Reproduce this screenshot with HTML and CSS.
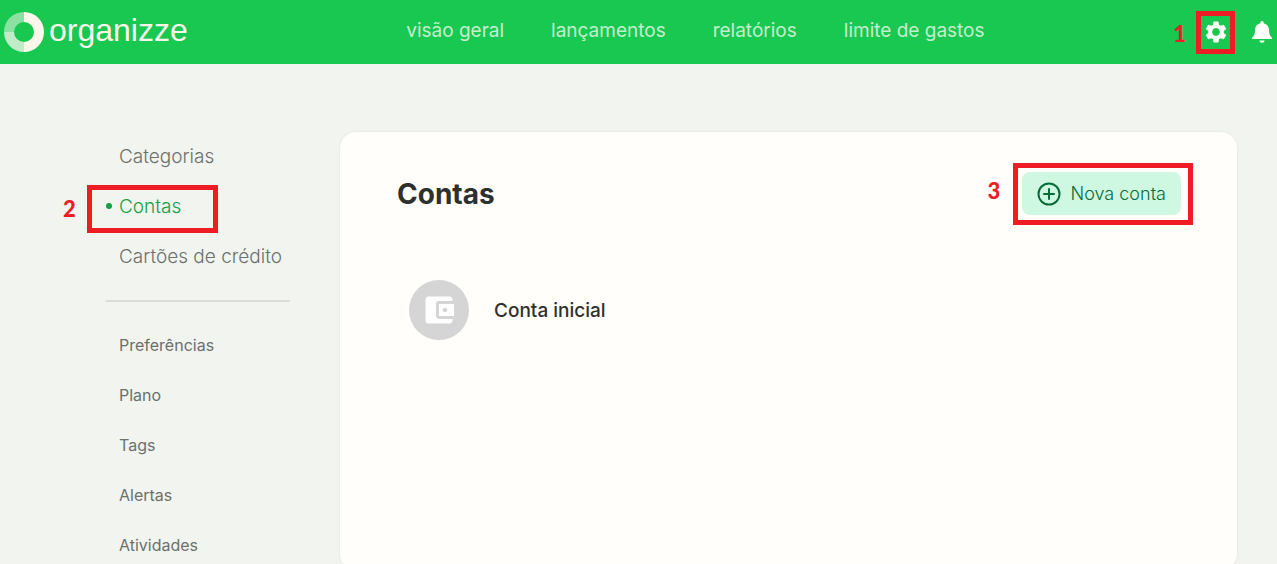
FILE: index.html
```html
<!DOCTYPE html>
<html lang="pt-BR">

<head>
    <meta charset="UTF-8">
    <meta name="viewport" content="width=device-width, initial-scale=1.0">
    <title>Organizze - Contas</title>
    <link rel="stylesheet" href="styles.css">
</head>

<body>
    <header class="topbar">
        <a class="logo" href="#">
            <svg width="40" height="40" viewBox="0 0 40 40" aria-hidden="true">
                <path fill="#fcf7ea" d="M20 0a20 20 0 0 1 0 40V30a10 10 0 0 0 0-20z" />
                <path fill="#c1ecc5" d="M20 40A20 20 0 0 1 0 20h10a10 10 0 0 0 10 10z" />
                <path fill="#8be19f" d="M0 20A20 20 0 0 1 20 0v10a10 10 0 0 0-10 10z" />
            </svg>
            <span>organizze</span>
        </a>

        <nav class="main-nav">
            <a href="#">visão geral</a>
            <a href="#">lançamentos</a>
            <a href="#">relatórios</a>
            <a href="#">limite de gastos</a>
        </nav>

        <div class="actions">
            <div class="step step-settings">
                <span class="step-number">1</span>
                <button class="icon-button" type="button" aria-label="Configurações">
                    <svg width="26" height="26" viewBox="0 0 24 24" aria-hidden="true">
                        <path fill="#fffef9" d="M19.14 12.94c.04-.3.06-.61.06-.94 0-.32-.02-.64-.07-.94l2.03-1.58a.49.49 0 0 0 .12-.61l-1.92-3.32a.488.488 0 0 0-.59-.22l-2.39.96c-.5-.38-1.03-.7-1.62-.94l-.36-2.54a.484.484 0 0 0-.48-.41h-3.84c-.24 0-.43.17-.47.41l-.36 2.54c-.59.24-1.13.57-1.62.94l-2.39-.96c-.22-.08-.47 0-.59.22L2.74 8.87c-.12.21-.08.47.12.61l2.03 1.58c-.05.3-.09.63-.09.94s.02.64.07.94l-2.03 1.58a.49.49 0 0 0-.12.61l1.92 3.32c.12.22.37.29.59.22l2.39-.96c.5.38 1.03.7 1.62.94l.36 2.54c.05.24.24.41.48.41h3.84c.24 0 .44-.17.47-.41l.36-2.54c.59-.24 1.13-.56 1.62-.94l2.39.96c.22.08.47 0 .59-.22l1.92-3.32c.12-.22.07-.47-.12-.61l-2.01-1.58zM12 15.6c-1.98 0-3.6-1.62-3.6-3.6s1.62-3.6 3.6-3.6 3.6 1.62 3.6 3.6-1.62 3.6-3.6 3.6z" />
                    </svg>
                </button>
            </div>
            <button class="icon-button" type="button" aria-label="Notificações">
                <svg width="22" height="24" viewBox="0 0 22 24" aria-hidden="true">
                    <path fill="#fffef9" d="M11 1c1 0 1.600.7 1.600 1.700v.5C16 4 18 6.500 18 9.500c0 4.500 1 6.500 2.800 8 .6.500.5 1.500-.5 1.500H1.700c-1 0-1.100-1-.5-1.500C3 16 4 14 4 9.500c0-3 2-5.500 5.400-6.300v-.5C9.400 1.700 10 1 11 1zM8.500 20.500h5c0 1.300-1 2.300-2.500 2.300s-2.500-1-2.500-2.300z" />
                </svg>
            </button>
        </div>
    </header>

    <div class="layout">
        <aside class="sidebar">
            <nav class="side-nav">
                <a href="#">Categorias</a>
                <div class="step step-accounts">
                    <span class="step-number">2</span>
                    <a class="active" href="#">Contas</a>
                </div>
                <a href="#">Cartões de crédito</a>
            </nav>
            <nav class="side-nav side-nav-small">
                <a href="#">Preferências</a>
                <a href="#">Plano</a>
                <a href="#">Tags</a>
                <a href="#">Alertas</a>
                <a href="#">Atividades</a>
            </nav>
        </aside>

        <main class="card">
            <div class="card-header">
                <h1>Contas</h1>
                <div class="step step-new">
                    <span class="step-number">3</span>
                    <button class="new-account" type="button">
                        <svg width="24" height="24" viewBox="0 0 24 24" fill="none" stroke="#076c38" stroke-width="2" stroke-linecap="round" aria-hidden="true">
                            <circle cx="12" cy="12" r="10.500" />
                            <path d="M12 7v10M7 12h10" />
                        </svg>
                        Nova conta
                    </button>
                </div>
            </div>

            <ul class="accounts">
                <li class="account">
                    <span class="account-icon">
                        <svg width="36" height="36" viewBox="0 0 24 24" fill="#fff" aria-hidden="true">
                            <path d="M21 18v1c0 1.100-.9 2-2 2H5a2 2 0 0 1-2-2V5c0-1.100.890-2 2-2h14c1.100 0 2 .9 2 2v1h-9a2 2 0 0 0-2 2v8c0 1.100.890 2 2 2h9zm-9-2h10V8H12v8zm4-2.500c-.830 0-1.500-.670-1.500-1.500s.670-1.500 1.500-1.500 1.500.670 1.500 1.500-.670 1.500-1.500 1.500z" />
                        </svg>
                    </span>
                    <span>Conta inicial</span>
                </li>
            </ul>
        </main>
    </div>
</body>

</html>
```
FILE: styles.css
```css
* {
    box-sizing: border-box;
}

body {
    margin: 0;
    height: 100vh;
    overflow: hidden;
    background: #f1f4ef;
    color: #2e302e;
    font-family: Inter, "Liberation Sans", sans-serif;
}

a {
    color: inherit;
    text-decoration: none;
}

button {
    border: 0;
    font: inherit;
    cursor: pointer;
}

svg {
    display: block;
    flex-shrink: 0;
}

/* top bar */
.topbar {
    display: flex;
    align-items: center;
    justify-content: space-between;
    height: 64px;
    padding: 0 4px;
    background: #19c850;
}

.logo {
    display: flex;
    align-items: center;
    gap: 5px;
    color: #fcf7ea;
    font-family: "Liberation Sans", sans-serif;
    font-size: 32px;
    line-height: 40px;
}

.logo span {
    padding-bottom: 4px;
}

.main-nav {
    display: flex;
    gap: 47px;
    padding-bottom: 4px;
    color: #c3f0cc;
    font-size: 19px;
}

.actions {
    display: flex;
    align-items: center;
    gap: 22px;
}

.icon-button {
    display: block;
    padding: 0;
    background: none;
}

/* numbered highlights */
.step {
    position: relative;
}

.step::after {
    content: "";
    position: absolute;
    border: 5px solid #ee1c25;
    pointer-events: none;
}

.step-number {
    position: absolute;
    color: #ee1c25;
    font-family: Lato, sans-serif;
    font-size: 22px;
    font-weight: 900;
    line-height: 24px;
}

.step-settings::after {
    inset: -8px -6px -9px -7px;
}

.step-settings .step-number {
    right: 43px;
    top: 3px;
}

.step-accounts::after {
    inset: 4px 72px -2px -19px;
}

.step-accounts .step-number {
    left: -43px;
    top: 16px;
}

.step-new::after {
    inset: -9px -12px -10px -9px;
}

.step-new .step-number {
    left: -34px;
    top: 7px;
}

/* page */
.layout {
    display: grid;
    grid-template-columns: 184px 1fr;
    gap: 50px;
    padding: 68px 40px 0 106px;
}

.sidebar {
    margin-top: -1px;
}

.side-nav a {
    display: flex;
    align-items: center;
    height: 50px;
    padding-left: 13px;
    color: #6d706d;
    font-size: 19px;
    font-weight: 300;
    white-space: nowrap;
}

.side-nav .active {
    gap: 7px;
    padding-left: 0;
    color: #14a045;
}

.side-nav .active::before {
    content: "";
    width: 6px;
    height: 6px;
    border-radius: 50%;
    background: #14a045;
}

.side-nav-small {
    margin-top: 19px;
    padding-top: 18px;
    border-top: 2px solid #d9dcd9;
}

.side-nav-small a {
    font-size: 16px;
    font-weight: 400;
}

.card {
    height: 438px;
    padding: 40px 56px 40px 57px;
    border-radius: 16px;
    background: #fffefa;
    box-shadow: 0 0 3px rgba(0, 0, 0, 0.08);
}

.card-header {
    display: flex;
    align-items: center;
    justify-content: space-between;
}

.card-header h1 {
    margin: 0;
    font-size: 28px;
    font-weight: 700;
}

.new-account {
    display: flex;
    align-items: center;
    gap: 10px;
    height: 43px;
    padding: 0 15px;
    border-radius: 8px;
    background: #cff8e3;
    color: #076c38;
    font-size: 18px;
    font-weight: 300;
}

.accounts {
    margin: 65px 0 0;
    padding: 0 12px;
    list-style: none;
}

.account {
    display: flex;
    align-items: center;
    gap: 25px;
    font-size: 19px;
    font-weight: 500;
}

.account-icon {
    display: flex;
    align-items: center;
    justify-content: center;
    width: 60px;
    height: 60px;
    border-radius: 50%;
    background: #d5d5d5;
}
```
